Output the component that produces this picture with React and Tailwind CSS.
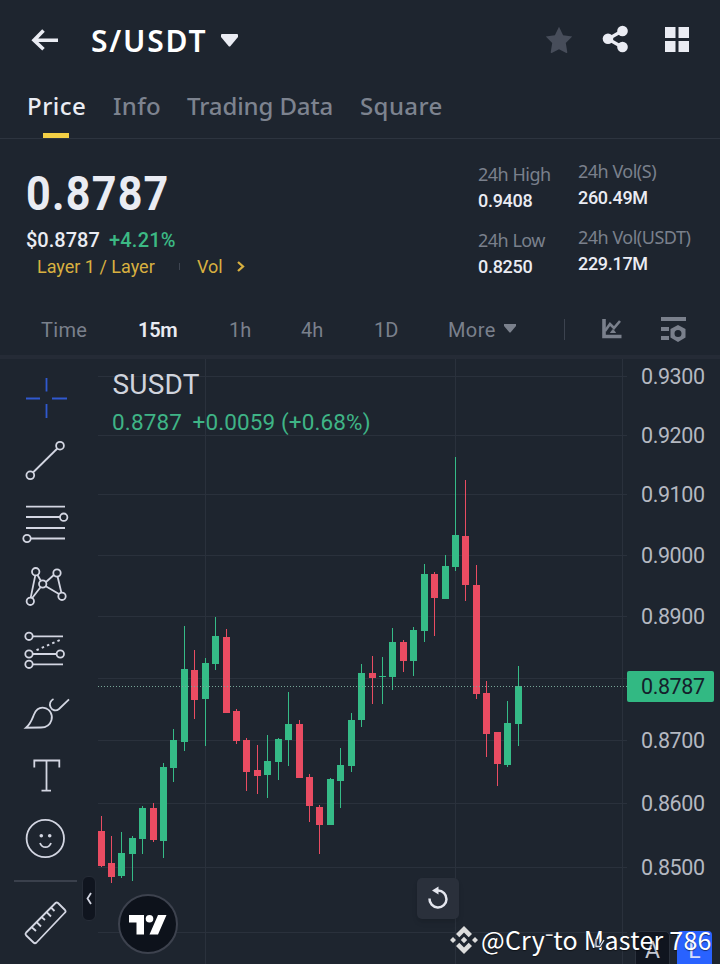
import { useState } from "react";

const UP = "#35bb87";
const DOWN = "#e94c62";

const TABS = [
  { name: "Price", cls: "w-[86px] tracking-[0.5px]" },
  { name: "Info", cls: "w-[74px] tracking-[0.3px]" },
  { name: "Trading Data", cls: "w-[173px] tracking-[-0.1px]" },
  { name: "Square", cls: "w-[90px] tracking-[0.4px]" },
];

const INTERVALS = [
  { name: "Time", cls: "w-[97px] tracking-[0.3px]" },
  { name: "15m", cls: "w-[91px] tracking-[-0.3px]" },
  { name: "1h", cls: "w-[72px]" },
  { name: "4h", cls: "w-[73px]" },
  { name: "1D", cls: "w-[74px]" },
];

// y of every price line
const PRICES = [
  ["0.9300", 376],
  ["0.9200", 435],
  ["0.9100", 494],
  ["0.9000", 555],
  ["0.8900", 616],
  ["", 678],
  ["0.8700", 740],
  ["0.8600", 803],
  ["0.8500", 867],
  ["", 932],
];

// [left, body top, body bottom, wick top, wick bottom, up?]
const CANDLES = [
  [98, 831, 866, 816, 867, 0],
  [108, 863, 877, 836, 883, 0],
  [118, 853, 876, 832, 878, 1],
  [129, 838, 854, 836, 881, 1],
  [139, 808, 839, 806, 854, 1],
  [150, 808, 840, 803, 842, 0],
  [160, 767, 841, 763, 858, 1],
  [170, 740, 768, 729, 782, 1],
  [181, 669, 742, 626, 751, 1],
  [191, 670, 700, 650, 719, 0],
  [202, 663, 699, 658, 746, 1],
  [212, 636, 664, 617, 670, 1],
  [223, 637, 713, 629, 713, 0],
  [233, 711, 741, 709, 744, 0],
  [243, 740, 772, 738, 791, 0],
  [254, 770, 776, 745, 794, 0],
  [264, 761, 775, 735, 798, 1],
  [275, 739, 762, 738, 780, 1],
  [285, 724, 740, 692, 766, 1],
  [296, 724, 778, 720, 778, 0],
  [306, 777, 806, 774, 822, 0],
  [316, 807, 825, 805, 854, 0],
  [327, 779, 825, 778, 825, 1],
  [337, 765, 781, 748, 808, 1],
  [348, 720, 766, 713, 772, 1],
  [358, 673, 720, 664, 727, 1],
  [369, 673, 678, 656, 704, 0],
  [379, 676, 677, 657, 704, 1],
  [389, 642, 677, 628, 690, 1],
  [400, 642, 661, 640, 672, 0],
  [410, 630, 661, 627, 676, 1],
  [421, 574, 631, 564, 642, 1],
  [431, 574, 598, 572, 636, 0],
  [442, 566, 599, 555, 599, 1],
  [452, 535, 567, 457, 571, 1],
  [462, 536, 585, 480, 601, 0],
  [473, 585, 694, 565, 699, 0],
  [483, 693, 734, 681, 757, 0],
  [494, 732, 764, 732, 786, 0],
  [504, 723, 765, 701, 767, 1],
  [515, 686, 724, 666, 746, 1],
];

function Header() {
  return (
    <header className="flex h-[78px] items-center pl-[31px] text-[#eaecf3]">
      <svg className="mt-[1px]" width="28" height="22" viewBox="0 0 28 22" fill="none" stroke="currentColor" strokeWidth="3.6">
        <path d="M27 11.2H3M12.5 1.5L3 11.2l9.5 9" />
      </svg>
      <h1 className="ml-[32px] w-[130px] pt-[4px] font-['Noto_Sans'] text-[30px] leading-[36px] font-semibold tracking-[1.8px] text-white">
        S/USDT
      </h1>
      <svg className="mt-[2px]" width="17" height="13" viewBox="0 0 17 13" fill="currentColor">
        <path d="M1 0h15q1 0 1 1v2L9.500 12q-1 1-2 0L0 3V1q0-1 1-1z" />
      </svg>
      <div className="ml-[307px] flex items-center">
        <svg className="mt-[2px]" width="28" height="28" viewBox="0 0 28 28" fill="#474d5a">
          <path d="M14 .8l4.100 8.400 9.100 1.300-6.400 6.500 1.500 9.300q0 1-1 .7L14 23.200 6.700 27q-1 .3-1-.7l1.500-9.300L.8 10.500l9.100-1.300z" />
        </svg>
        <svg className="ml-[29px]" width="27" height="28" viewBox="0 0 27 28" fill="currentColor">
          <path d="M20 6L6 14l14 8" fill="none" stroke="currentColor" strokeWidth="3.2" />
          <circle cx="20.500" cy="6" r="5.300" />
          <circle cx="6" cy="13.800" r="5.300" />
          <circle cx="20.500" cy="22" r="5.300" />
        </svg>
        <svg className="ml-[36px]" width="24" height="25" viewBox="0 0 24 25" fill="currentColor">
          <path d="M0 0h10.500v11H0zM13.500 0H24v11H13.500zM0 14h10.500v11H0zM13.500 14H24v11H13.500z" />
        </svg>
      </div>
    </header>
  );
}

function Tabs({ active, onSelect }) {
  return (
    <nav className="flex h-[61px] border-b border-[#2d343f] pl-[27px] font-['Noto_Sans'] text-[24px] font-medium">
      {TABS.map((tab) => (
        <button
          key={tab.name}
          onClick={() => onSelect(tab.name)}
          className={`flex flex-col items-start text-left leading-[33px] whitespace-nowrap ${tab.cls} ${
            active === tab.name ? "text-[#eaecf3]" : "text-[#7d838f]"
          }`}
        >
          <span className="mt-[11px] h-[44px]">{tab.name}</span>
          {active === tab.name && <span className="ml-[16px] h-[5px] w-[26px] bg-[#f3cf45]" />}
        </button>
      ))}
    </nav>
  );
}

function Stat({ label, value }) {
  return (
    <div className="h-[66px]">
      <div className="h-[26px] font-['Noto_Sans'] text-[18px] leading-[24px] tracking-[-0.5px] whitespace-nowrap text-[#7a808c]">
        {label}
      </div>
      <div className="font-['Roboto'] text-[18px] leading-[26px] font-medium tracking-[-0.3px] text-[#eaecf3]">{value}</div>
    </div>
  );
}

function Summary() {
  return (
    <section className="flex h-[164px]">
      <div className="w-[451px] pl-[26px] font-['Roboto']">
        <div className="mt-[27px] origin-left scale-x-[0.88] text-[49px] leading-[56px] font-bold tracking-[1.4px] text-[#eaecf3]">
          0.8787
        </div>
        <div className="mt-[5px] flex text-[20px] leading-[26px] font-medium">
          <span className="w-[83px] text-[#eaecf3]">$0.8787</span>
          <span className="tracking-[0.2px] text-[#3cb984]">+4.21%</span>
        </div>
        <div className="ml-[11px] flex items-center text-[18px] leading-[27px] text-[#d8b040]">
          <span className="w-[142px]">Layer 1 / Layer</span>
          <span className="h-[7px] w-[1px] bg-[#3e4551]" />
          <span className="ml-[17px] w-[40px]">Vol</span>
          <svg width="8" height="11" viewBox="0 0 8 11" fill="none" stroke="currentColor" strokeWidth="2.300">
            <path d="M1 1l5 4.500L1 10" />
          </svg>
        </div>
      </div>
      <div className="w-[101px] pt-[23px] pl-[27px]">
        <Stat label="24h High" value="0.9408" />
        <Stat label="24h Low" value="0.8250" />
      </div>
      <div className="pt-[20px] pl-[26px]">
        <Stat label="24h Vol(S)" value="260.49M" />
        <Stat label="24h Vol(USDT)" value="229.17M" />
      </div>
    </section>
  );
}

function Intervals({ active, onSelect }) {
  return (
    <div className="flex h-[56px] items-center border-b-4 border-[#252b36] pl-[41px] font-['Roboto'] text-[20px] text-[#7a808c]">
      {INTERVALS.map((item) => (
        <button
          key={item.name}
          onClick={() => onSelect(item.name)}
          className={`pt-[2px] text-left ${item.cls} ${active === item.name ? "font-semibold text-[#eaecf3]" : ""}`}
        >
          {item.name}
        </button>
      ))}
      <span className="w-[56px] pt-[2px] tracking-[0.4px]">More</span>
      <svg className="mb-[2px]" width="12" height="9" viewBox="0 0 12 9" fill="currentColor">
        <path d="M0 0h12v2L6.500 8.500h-1L0 2z" />
      </svg>
      <span className="ml-[48px] h-[21px] w-[1px] bg-[#3c434f]" />
      <svg className="mb-[2px] ml-[37px]" width="20" height="21" viewBox="0 0 20 21" fill="none" stroke="currentColor">
        <path d="M2 1v17.500H19.500" strokeWidth="3.600" />
        <path d="M3 13l5-7 4 4 6-7" strokeWidth="2.600" />
        <path d="M8.500 14.500l2.500-3 2.500 3z" fill="currentColor" strokeWidth="1" />
      </svg>
      <svg className="ml-[39px]" width="25" height="26" viewBox="0 0 25 26" fill="currentColor">
        <path d="M0 1h25v4H0zM0 11h8v4H0zM0 20h8v4H0z" />
        <path d="M17 9l7.500 4v8.500L17 26l-7.500-4.500V13zM17 14a3.500 3.500 0 100 7 3.500 3.500 0 000-7z" fillRule="evenodd" />
      </svg>
    </div>
  );
}

function Tool({ children, color = "#d3d6e2" }) {
  return (
    <svg className="shrink-0" width="48" height="48" viewBox="0 0 48 48" fill="none" stroke={color} strokeWidth="1.800">
      {children}
    </svg>
  );
}

function Toolbar() {
  return (
    <aside className="flex w-[98px] shrink-0 flex-col gap-[15px] pt-[15px] pl-[22px]">
      <Tool color="#3059cf">
        <path d="M24.500 4v13.500M24.500 30v14M4 24.500h14M30 24.500h15" />
      </Tool>
      <Tool>
        <path d="M11 35.500L35.300 11.500" />
        <circle cx="38" cy="8.700" r="3.900" />
        <circle cx="8.300" cy="38.300" r="3.900" />
      </Tool>
      <Tool>
        <path d="M4 6.700h39M4 17h34M4 28h39M9 38.500h34" />
        <circle cx="41.700" cy="17.200" r="3.700" />
        <circle cx="5" cy="38.500" r="3.700" />
      </Tool>
      <Tool>
        <path d="M8.700 34.600L13.300 12.400M15.500 12l3.300 5.700M24 19l7.800-7M35.600 13.700l3.800 16M37 31L23.800 23.200M10.200 35l8.300-10.800" />
        <circle cx="13.700" cy="8.700" r="3.700" />
        <circle cx="35" cy="10" r="3.700" />
        <circle cx="20.700" cy="21" r="3.700" />
        <circle cx="8.300" cy="38.300" r="3.700" />
        <circle cx="40" cy="33.300" r="3.700" />
      </Tool>
      <Tool>
        <path d="M11 10.300h30M11 28h23.500M11 38.300h30" />
        <path d="M14.500 24.200L40 13.200" strokeWidth="2" strokeDasharray="2.500 3.200" />
        <circle cx="7" cy="10.300" r="3.700" />
        <circle cx="7" cy="28" r="3.700" />
        <circle cx="38.300" cy="28" r="3.700" />
        <circle cx="7" cy="38.300" r="3.700" />
      </Tool>
      <Tool>
        <path d="M4 38.700C9 34.500 10.500 29 12 25.500 14.500 19.500 18 18.200 22 18.800c6 1 9 7 7.500 12.200-1.500 5-5.500 7.500-10.500 7.500z" />
        <path d="M31.500 10C28.500 11.500 27 15 28.500 18c1.500 3.500 5.500 4.500 8.500 2L47 10.300" />
      </Tool>
      <Tool>
        <path d="M12.300 15.500V8.500h25v7M24.500 8.500v30M19.500 38.700h9.500" />
      </Tool>
      <Tool>
        <circle cx="23.300" cy="23.500" r="18.700" />
        <path d="M18 28q1.500 4.200 5.500 4.200t5.500-4.200" />
        <circle cx="19.300" cy="20.700" r="1.800" fill="#d3d6e2" stroke="none" />
        <circle cx="27.700" cy="20.700" r="1.800" fill="#d3d6e2" stroke="none" />
      </Tool>
      <div className="mt-[2px] -ml-[8px] h-[2px] w-[63px] shrink-0 bg-[#3a404c]" />
      <Tool>
        <g transform="translate(0 1.500)" strokeLinejoin="round">
          <path d="M33.500 4.500q1.200-1 2.500 0l7 7q1.200 1.300 0 2.500L14.500 44q-1.500 1.500-3 0l-7.300-7q-1.300-1.500 0-3z" />
          <path d="M9.500 28.500l4.500 4M14.500 23.500l4.500 4.500M19.500 18.500l3.500 3M24.500 13.500l4.500 4.500M29 9l3.500 3.500" />
        </g>
      </Tool>
    </aside>
  );
}

function Chart() {
  return (
    <svg className="block shrink-0" width="622" height="605" viewBox="98 359 622 605" shapeRendering="crispEdges">
      <g fill="#2a313c">
        {PRICES.map(([, y]) => (
          <rect key={y} x="98" y={y} width="529" height="1" />
        ))}
        <rect x="205" y="359" width="1" height="605" />
        <rect x="455" y="359" width="1" height="605" />
        <rect x="622" y="359" width="1" height="605" />
      </g>
      {CANDLES.map(([x, top, bottom, high, low, up]) => (
        <g key={x} fill={up ? UP : DOWN}>
          <rect x={x + 3} y={high} width="1" height={low - high} />
          <rect x={x} y={top} width="7" height={bottom - top} />
        </g>
      ))}
      <path d="M98 686.500H627" stroke="#77a597" strokeDasharray="1 2" />
      <rect x="627" y="671" width="87" height="31" rx="2" fill="#32b983" shapeRendering="auto" />
      <g fontFamily="Roboto" fontSize="21.500" fill="#b4b8c1">
        {PRICES.filter(([label]) => label).map(([label, y]) => (
          <text key={label} x="641" y={y + 8} textLength="64">
            {label}
          </text>
        ))}
        <text x="641" y="694" textLength="64" fill="#15202b">
          0.8787
        </text>
      </g>
      <g fontFamily="Roboto">
        <text x="112.500" y="394" fontSize="28" textLength="87" fill="#d0d4dd">
          SUSDT
        </text>
        <g fontSize="22.500" fill="#3fb486">
          <text x="112" y="430" textLength="70">
            0.8787
          </text>
          <text x="192.500" y="430" textLength="178">
            +0.0059 (+0.68%)
          </text>
        </g>
      </g>
    </svg>
  );
}

function Watermark() {
  return (
    <div className="absolute bottom-[6px] left-[450px] flex h-[36px] items-center text-white">
      <svg width="28" height="28" viewBox="0 0 28 28" fill="#dcdcdc">
        <path d="M14 0l8 8-3.300 3.200L14 6.500l-4.700 4.700L6 8zM14 28l8-8-3.300-3.200L14 21.500l-4.700-4.700L6 20zM3 11l3 3-3 3-3-3zM25 11l3 3-3 3-3-3zM14 10.800l3.200 3.200-3.200 3.200-3.200-3.200z" />
      </svg>
      <span className="mb-[2px] ml-[3px] font-['Noto_Sans_CJK_SC',sans-serif] text-[25px] leading-[36px] tracking-[0.25px] whitespace-nowrap [text-shadow:0_1px_1px_#0008]">
        @Cry⁻to Master 786
      </span>
    </div>
  );
}

export default function App() {
  const [tab, setTab] = useState("Price");
  const [interval, setInterval] = useState("15m");

  return (
    <div className="relative h-[964px] w-[720px] overflow-hidden bg-[#1e252f]">
      <Header />
      <Tabs active={tab} onSelect={setTab} />
      <Summary />
      <Intervals active={interval} onSelect={setInterval} />
      <main className="flex h-[605px]">
        <Toolbar />
        <Chart />
      </main>

      {/* floating controls over the chart */}
      <button className="absolute top-[876px] left-[82px] flex h-[45px] w-[14px] items-center justify-center rounded-[6px] border border-[#262c37] bg-[#10151f]">
        <svg className="shrink-0" width="6" height="13" viewBox="0 0 6 13" fill="none" stroke="#d3d6e2" strokeWidth="1.800">
          <path d="M5 1L1.500 6.500 5 12" />
        </svg>
      </button>
      <div className="absolute top-[894px] left-[118px] flex h-[60px] w-[60px] items-center justify-center rounded-full border-2 border-[#3d424e] bg-[#0d121b]">
        <svg className="mt-[2px]" width="38" height="20" viewBox="0 0 38 20" fill="#fff">
          <path d="M0 0h15v19.500H7.500V7.500H0zM29 0h8.500L29 19.500h-8.500z" />
          <circle cx="20.500" cy="3.800" r="3.800" />
        </svg>
      </div>
      <button className="absolute top-[878px] left-[417px] flex h-[41px] w-[42px] items-center justify-center rounded-[5px] bg-[#2a303b] shadow-md">
        <svg className="mb-[2px]" width="22" height="24" viewBox="0 0 22 24" fill="none" stroke="#e4e6ee" strokeWidth="2.500">
          <path d="M2.500 12.500a8.500 8.500 0 1 0 8.500-8h-2" />
          <path d="M11.500 .5v8L5 4.500z" fill="#e4e6ee" stroke="none" />
        </svg>
      </button>
      <div className="absolute top-[931px] left-[635px] h-[40px] w-[35px] rounded-[5px] border border-[#2b313c] bg-[#10151f] pt-[5px] text-center font-['Roboto'] text-[23px] leading-[28px] text-[#c5c8d2]">
        A
      </div>
      <div className="absolute top-[931px] left-[677px] h-[40px] w-[35px] rounded-[4px] bg-[#2962ff] pt-[6px] text-center font-['Roboto'] text-[23px] leading-[28px] text-[#d5defa]">
        L
      </div>
      <Watermark />
      <svg className="absolute top-[938px] left-[594px]" width="12" height="11" viewBox="0 0 12 11" fill="none">
        <path d="M2 1v7.500h4L10 2" stroke="#1e252f" strokeWidth="3" />
        <path d="M2 1v7.500h4L10 2" stroke="#dfe2ea" strokeWidth="1.300" />
      </svg>
    </div>
  );
}
